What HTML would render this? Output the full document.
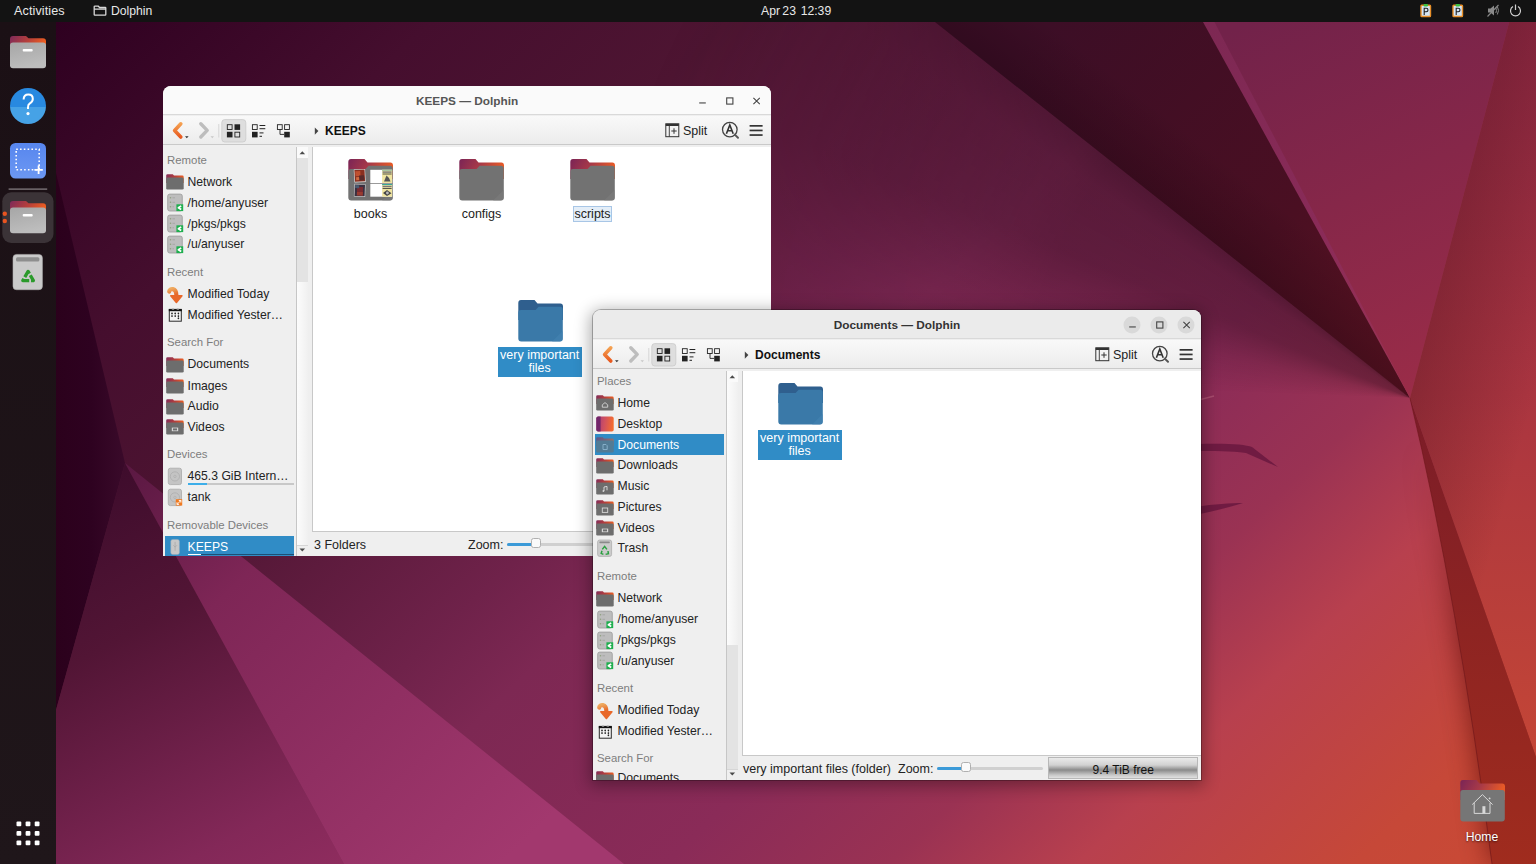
<!DOCTYPE html>
<html><head><meta charset="utf-8">
<style>
*{box-sizing:border-box}
html,body{margin:0;padding:0;width:1536px;height:864px;overflow:hidden;font-family:"Liberation Sans",sans-serif;background:#300020}
.abs{position:absolute}
#wall{position:absolute;left:0;top:0}
#topbar{position:absolute;left:0;top:0;width:1536px;height:22px;background:#131313;color:#e8e8e8;font-size:12.6px}
#dock{position:absolute;left:0;top:22px;width:56px;height:842px;background:linear-gradient(180deg,#1b1015,#1f161a)}
.win{position:absolute;width:608px;height:470px;overflow:hidden;border-radius:8px 8px 0 0;background:#efefef;color:#232323}
.win .tb{position:absolute;left:0;top:0;width:100%;height:29px;border-bottom:1px solid #d9d9d9}
.win .ttl{position:absolute;left:0;top:0;width:100%;text-align:center;font-weight:bold;font-size:11.8px;line-height:15px;padding-top:8px}
.win .tool{position:absolute;left:0;top:30px;width:100%;height:29px;background:linear-gradient(180deg,#f9f9f9,#ececec);border-bottom:1px solid #c9c9c9}
.win .side{position:absolute;left:0;top:59px;width:133px;height:411px;overflow:hidden;background:#efefef;font-size:12.5px}
.win .sitem{position:absolute;left:0;width:133px;height:21.5px;white-space:nowrap}
.win .sitem span{position:absolute;left:24.5px;line-height:15px}
.win .sitem svg{position:absolute;left:3px;top:3.5px}
.win .shdr{position:absolute;left:4px;color:#7d7d7d;white-space:nowrap;line-height:15px;font-size:12.3px}
.win .sel{color:#fff}
.win .sel::before{content:'';position:absolute;left:1.7px;top:0;width:129.4px;height:21.5px;background:#308cc6}
.win .sb{position:absolute;left:133px;top:61px;width:11.5px;height:409px;border-left:1px solid #c6c6c6;background:#efefef}
.win .content{position:absolute;left:149px;top:61px;width:459px;height:385px;background:#fff;border-left:1px solid #c8c8c8;border-bottom:1px solid #c8c8c8;overflow:hidden}
.win .status{position:absolute;left:149px;top:446px;width:459px;height:24px;font-size:12.5px;white-space:nowrap}
.lbl{position:absolute;text-align:center;font-size:12.5px;line-height:13.6px;white-space:nowrap}
</style></head><body>
<svg width="0" height="0" style="position:absolute"><defs>
<linearGradient id="sfBack" x1="0" y1="0" x2="1" y2="0.3"><stop offset="0" stop-color="#7e2a5a"/><stop offset="0.55" stop-color="#b8403a"/><stop offset="1" stop-color="#ee5e20"/></linearGradient>
<linearGradient id="bfBack" x1="0" y1="0" x2="1" y2="0.25"><stop offset="0" stop-color="#7a2456"/><stop offset="0.5" stop-color="#a83a48"/><stop offset="1" stop-color="#e85a26"/></linearGradient>
</defs></svg>
<!-- WALLPAPER -->
<svg id="wall" width="1536" height="864" viewBox="0 0 1536 864">
<defs>
<linearGradient id="gMain" gradientUnits="userSpaceOnUse" x1="0" y1="0" x2="1171" y2="1232">
<stop offset="0.032" stop-color="#2e0020"/>
<stop offset="0.184" stop-color="#450e2e"/>
<stop offset="0.305" stop-color="#4e1532"/>
<stop offset="0.448" stop-color="#6f224a"/>
<stop offset="0.501" stop-color="#7d2853"/>
<stop offset="0.638" stop-color="#8a2b58"/>
<stop offset="0.729" stop-color="#9a3253"/>
<stop offset="0.805" stop-color="#b8404e"/>
<stop offset="0.917" stop-color="#c64838"/>
<stop offset="1" stop-color="#ca4a34"/>
</linearGradient>
<linearGradient id="gShadow" gradientUnits="userSpaceOnUse" x1="1100" y1="151" x2="988" y2="292">
<stop offset="0" stop-color="#100008" stop-opacity="0.33"/>
<stop offset="0.42" stop-color="#100008" stop-opacity="0.28"/>
<stop offset="0.62" stop-color="#100008" stop-opacity="0.18"/>
<stop offset="0.93" stop-color="#100008" stop-opacity="0"/>
</linearGradient>
<linearGradient id="gFacetA" gradientUnits="userSpaceOnUse" x1="125" y1="463" x2="340" y2="864">
<stop offset="0" stop-color="#3e0c2c"/><stop offset="0.336" stop-color="#521535"/><stop offset="0.835" stop-color="#832858"/><stop offset="1" stop-color="#8e2c5e"/>
</linearGradient>
<linearGradient id="gLeft" gradientUnits="userSpaceOnUse" x1="40" y1="0" x2="125" y2="0">
<stop offset="0" stop-color="#2a001a"/><stop offset="0.6" stop-color="#2e0220"/><stop offset="1" stop-color="#3a0a2a"/>
</linearGradient>
<linearGradient id="gPink" gradientUnits="userSpaceOnUse" x1="125" y1="463" x2="500" y2="864">
<stop offset="0" stop-color="#5a1842"/><stop offset="0.3" stop-color="#7e2656"/><stop offset="1" stop-color="#a2386e"/>
</linearGradient>
<linearGradient id="gDark" gradientUnits="userSpaceOnUse" x1="1050" y1="22" x2="1400" y2="390">
<stop offset="0" stop-color="#3c0e26"/><stop offset="0.6" stop-color="#4a0f22"/><stop offset="1" stop-color="#5c1322"/>
</linearGradient>
<linearGradient id="gDarkEdge" gradientUnits="userSpaceOnUse" x1="1100" y1="152.6" x2="1143" y2="98">
<stop offset="0" stop-color="#100008" stop-opacity="0.25"/><stop offset="1" stop-color="#100008" stop-opacity="0"/>
</linearGradient>
<linearGradient id="gLight" gradientUnits="userSpaceOnUse" x1="1250" y1="22" x2="1420" y2="390">
<stop offset="0" stop-color="#72224a"/><stop offset="1" stop-color="#9a2c48"/>
</linearGradient>
<linearGradient id="gRight" gradientUnits="userSpaceOnUse" x1="0" y1="22" x2="0" y2="765">
<stop offset="0" stop-color="#962b46"/><stop offset="0.5" stop-color="#aa3540"/><stop offset="1" stop-color="#c44636"/>
</linearGradient>
<linearGradient id="gRightSh" gradientUnits="userSpaceOnUse" x1="1462" y1="210" x2="1578" y2="242">
<stop offset="0" stop-color="#3a0a18" stop-opacity="0.3"/><stop offset="1" stop-color="#3a0a18" stop-opacity="0"/>
</linearGradient>
<linearGradient id="gCrease" gradientUnits="userSpaceOnUse" x1="1490" y1="630" x2="1440" y2="647">
<stop offset="0" stop-color="#6a1020" stop-opacity="0.55"/><stop offset="1" stop-color="#6a1020" stop-opacity="0"/>
</linearGradient>
<linearGradient id="gCrease2" gradientUnits="userSpaceOnUse" x1="1536" y1="765" x2="1520" y2="864">
<stop offset="0" stop-color="#8a2020"/><stop offset="1" stop-color="#9a2a20"/>
</linearGradient>
<linearGradient id="gShMask" gradientUnits="userSpaceOnUse" x1="935" y1="22" x2="1410" y2="398">
<stop offset="0" stop-color="#fff" stop-opacity="0.45"/><stop offset="1" stop-color="#fff" stop-opacity="1"/>
</linearGradient>
<mask id="shMask" maskUnits="userSpaceOnUse" x="0" y="0" width="1536" height="864"><rect x="0" y="0" width="1536" height="864" fill="url(#gShMask)"/></mask>
<linearGradient id="gBand" gradientUnits="userSpaceOnUse" x1="0" y1="398" x2="0" y2="864">
<stop offset="0" stop-color="#7a1c28"/><stop offset="0.5" stop-color="#8e2422"/><stop offset="1" stop-color="#a02c1e"/>
</linearGradient>
<filter id="blur14" x="-100%" y="-20%" width="300%" height="140%"><feGaussianBlur stdDeviation="14"/></filter>
<linearGradient id="gBandMask" gradientUnits="userSpaceOnUse" x1="0" y1="430" x2="0" y2="640">
<stop offset="0" stop-color="#fff" stop-opacity="0"/><stop offset="1" stop-color="#fff" stop-opacity="1"/>
</linearGradient>
<mask id="bandMask" maskUnits="userSpaceOnUse" x="0" y="0" width="1536" height="864"><rect x="0" y="0" width="1536" height="864" fill="url(#gBandMask)"/></mask>
<filter id="blur40" x="-50%" y="-50%" width="200%" height="200%"><feGaussianBlur stdDeviation="40"/></filter>
<filter id="blur3" x="-20%" y="-20%" width="140%" height="140%"><feGaussianBlur stdDeviation="3"/></filter>
</defs>
<rect x="0" y="0" width="1536" height="864" fill="url(#gMain)"/>
<polygon points="0,0 15,0 125,463 13,864 0,864" fill="url(#gLeft)"/>
<polygon points="125,463 13,864 344,864" fill="url(#gFacetA)"/>
<polygon points="125,463 344,864 624,864" fill="url(#gPink)"/>
<path d="M1410,398 Q1458,600 1492,864 L1536,864 L1536,757 Z" fill="#4a0810" opacity="0.6" filter="url(#blur14)" mask="url(#bandMask)"/>
</svg>
<div class="abs" style="left:0;top:0;width:1536px;height:864px;background:conic-gradient(from 0deg at 1410px 398px, rgba(16,0,8,0) 0deg, rgba(16,0,8,0) 272deg, rgba(16,0,8,0.12) 283deg, rgba(16,0,8,0.30) 293deg, rgba(16,0,8,0.34) 304deg, rgba(16,0,8,0.42) 308deg, rgba(16,0,8,0.42) 310deg, rgba(16,0,8,0) 310.5deg);-webkit-mask-image:radial-gradient(circle at 1410px 398px, #000 0px, #000 380px, rgba(0,0,0,0.6) 600px, rgba(0,0,0,0) 820px)"></div>
<svg class="abs" style="left:0;top:0" width="1536" height="864" viewBox="0 0 1536 864">
<polygon points="935,22 1203,22 1410,398" fill="url(#gDark)"/>
<polygon points="935,22 1203,22 1410,398" fill="url(#gDarkEdge)"/>
<polygon points="1203,0 1515,0 1410,398" fill="url(#gLight)"/>
<polygon points="1515,0 1536,0 1536,757 1410,398" fill="url(#gRight)"/>
<polygon points="1515,0 1536,0 1536,757 1410,398" fill="url(#gRightSh)"/>
<path d="M1410,398 Q1458,600 1492,864 L1536,864 L1536,757 Z" fill="url(#gBand)"/>
<path d="M1410,398 Q1458,600 1492,864" fill="none" stroke="#6a1418" stroke-width="1" opacity="0.6"/>
<path d="M1195,444 C1225,443 1245,444 1252,447 L1278,467 L1246,453 C1230,451 1215,451 1195,451 Z" fill="#6c1a40" opacity="0.9"/>
<path d="M1195,401 L1214,396" stroke="#b45a78" stroke-width="1.3" opacity="0.7"/>
<path d="M1195,507 C1215,504 1230,503 1243,503 C1230,507 1215,511 1195,515 Z" fill="#6c1a40" opacity="0.9"/>
</svg>



<div class="abs" style="left:1458px;top:780px;width:48px;height:66px">
<svg class="abs" style="left:2px;top:0" width="46" height="42" viewBox="0 0 46 42">
<path d="M3,0 H16.5 L19.5,3.5 H42.3 Q45,3.5 45,6.5 V20 H0.3 V3 Q0.3,0 3,0 Z" fill="url(#bfBack)"/>
<path d="M3,9.9 H42 Q44.8,9.9 44.8,12.9 V38.6 Q44.8,41.6 41.8,41.6 H3.3 Q0.3,41.6 0.3,38.6 V12.9 Q0.3,9.9 3,9.9 Z" fill="#767676"/>
<path d="M12.2,24.6 L22.4,14.6 L32.6,24.6 M14.2,22.8 V33.4 H30 V22.8" fill="none" stroke="#d8d8d8" stroke-width="1"/>
<rect x="22.4" y="26.2" width="3" height="7.2" fill="#d8d8d8"/><circle cx="29.6" cy="18.4" r="0.9" fill="#d8d8d8"/>
</svg>
<div class="abs" style="left:-10px;top:49.5px;width:68px;text-align:center;color:#fff;font-size:12.2px;line-height:14px;text-shadow:0 1px 2px rgba(0,0,0,0.6)">Home</div>
</div>
<div class="win" style="left:163px;top:86px;">
<div class="tb" style="background:#fafafa"><div class="ttl" style="color:#555">KEEPS — Dolphin</div><svg class="abs" style="left:0;top:0" width="608" height="29" viewBox="0 0 608 29">
<rect x="536.2" y="16.4" width="6.6" height="1.1" fill="#444"/>
<rect x="563.7" y="11.9" width="6.2" height="6.2" fill="none" stroke="#444" stroke-width="1.1"/>
<path d="M590.4,11.8 L596.8,18.2 M596.8,11.8 L590.4,18.2" stroke="#444" stroke-width="1.1"/>
</svg></div>
<div class="tool">
<svg class="abs" style="left:0;top:0" width="608" height="29" viewBox="0 30 608 29">
<defs><linearGradient id="bkGKEEPS" x1="0" y1="0" x2="0" y2="1"><stop offset="0" stop-color="#f4a050"/><stop offset="1" stop-color="#e85a20"/></linearGradient></defs>
<path d="M17.8,37.8 L11.6,44.4 L17.8,51" fill="none" stroke="url(#bkGKEEPS)" stroke-width="3.6" stroke-linejoin="round" stroke-linecap="round"/>
<path d="M22,50.2 L25.6,50.2 L23.8,52.3 Z" fill="#333"/>
<path d="M37.8,37.8 L44.2,44.4 L37.8,51" fill="none" stroke="#bdbdbd" stroke-width="3.4" stroke-linejoin="round" stroke-linecap="round"/>
<path d="M47.5,50.2 L51,50.2 L49.3,52.3 Z" fill="#c8c8c8"/>
<rect x="55.3" y="38" width="1" height="13.5" fill="#d6d6d6"/>
<rect x="58.8" y="33.6" width="24" height="22.4" rx="3" fill="#dedede" stroke="#cacaca" stroke-width="0.8"/>
<g fill="#222"><rect x="71.5" y="38.3" width="5.6" height="5.6"/><rect x="63.9" y="45.8" width="5.6" height="5.6"/></g>
<g fill="none" stroke="#222" stroke-width="0.9"><rect x="64.3" y="38.7" width="4.8" height="4.8"/><rect x="71.9" y="46.2" width="4.8" height="4.8"/></g>
<rect x="89.4" y="38.7" width="4.8" height="4.8" fill="none" stroke="#222" stroke-width="0.9"/>
<rect x="89" y="45.8" width="5.6" height="5.6" fill="#222"/>
<g fill="#222"><rect x="96.5" y="39" width="5.8" height="1"/><rect x="96.5" y="42.2" width="5.8" height="1"/><rect x="96.5" y="46.4" width="4" height="1"/><rect x="96.5" y="49.8" width="2.5" height="1"/></g>
<g fill="none" stroke="#222" stroke-width="0.9"><rect x="114.4" y="38.7" width="4.8" height="4.8"/><rect x="121.6" y="38.7" width="4.8" height="4.8"/><path d="M117,43.5 V48.4 H121"/></g>
<rect x="121.2" y="45.8" width="5.6" height="5.6" fill="#222"/>
<path d="M151.8,41.6 L155.4,45.1 L151.8,48.7 Z" fill="#444"/>
<rect x="502.8" y="37.8" width="13" height="12.9" fill="none" stroke="#333" stroke-width="1"/>
<rect x="502.8" y="37.8" width="13" height="2.2" fill="#333"/>
<path d="M506.3,40 V50.7" stroke="#333" stroke-width="0.9"/>
<path d="M511,42.3 V47.8 M508.3,45 H513.7" stroke="#333" stroke-width="1"/>
<circle cx="566.8" cy="43.6" r="7.3" fill="none" stroke="#444" stroke-width="1.3"/>
<path d="M571.8,48.6 L575,51.8" stroke="#555" stroke-width="2" stroke-linecap="round"/>
<path d="M563.4,47.8 L566.8,39 L570.2,47.8 M564.6,44.8 H569" fill="none" stroke="#333" stroke-width="1.6"/>
<g fill="#333"><rect x="586.6" y="39" width="13" height="1.7"/><rect x="586.6" y="43.6" width="13" height="1.7"/><rect x="586.6" y="48.2" width="13" height="1.7"/></g>
</svg>
<span class="abs" style="left:162px;top:8px;font-weight:bold;font-size:12px;line-height:15px;color:#111">KEEPS</span>
<span class="abs" style="left:520px;top:8px;font-size:12.5px;line-height:15px;color:#222">Split</span>
</div>
<div class="side"><div class="shdr" style="top:8.23px;font-size:11.4px">Remote</div>
<div class="sitem" style="top:25.90px"><svg width="18" height="16" viewBox="0 0 18 16"><path d="M1.5,0.3 H6.8 L8,1.6 H16.3 Q17.7,1.6 17.7,3 V9 H0.2 V1.6 Q0.2,0.3 1.5,0.3 Z" fill="url(#sfBack)"/><path d="M1.5,3.6 H16.3 Q17.7,3.6 17.7,5 V14.2 Q17.7,15.6 16.3,15.6 H1.5 Q0.2,15.6 0.2,14.2 V5 Q0.2,3.6 1.5,3.6 Z" fill="#6d6d6d"/></svg><span style="top:3.97px;font-size:12.2px">Network</span></div>
<div class="sitem" style="top:46.70px"><svg width="18" height="18" viewBox="0 0 18 18" style="overflow:visible"><rect x="1.7" y="-0.9" width="14.6" height="16.9" rx="2" fill="#bdbdbd" stroke="#9a9a9a" stroke-width="0.8"/><g fill="#8fa07f"><circle cx="4.5" cy="2.8" r="0.8"/><circle cx="4.5" cy="7.3" r="0.8"/><circle cx="4.5" cy="11.8" r="0.8"/></g><g stroke="#999" stroke-width="0.6"><path d="M6.5,2.8 H9"/><path d="M6.5,7.3 H9"/><path d="M6.5,11.8 H8"/></g><rect x="10.4" y="9.3" width="6.8" height="6.8" fill="#1eae4e"/><path d="M15.2,10.9 L12.4,12.7 L15.2,14.5" fill="none" stroke="#fff" stroke-width="1.7" stroke-linejoin="round"/></svg><span style="top:3.97px;font-size:12.2px">/home/anyuser</span></div>
<div class="sitem" style="top:67.60px"><svg width="18" height="18" viewBox="0 0 18 18" style="overflow:visible"><rect x="1.7" y="-0.9" width="14.6" height="16.9" rx="2" fill="#bdbdbd" stroke="#9a9a9a" stroke-width="0.8"/><g fill="#8fa07f"><circle cx="4.5" cy="2.8" r="0.8"/><circle cx="4.5" cy="7.3" r="0.8"/><circle cx="4.5" cy="11.8" r="0.8"/></g><g stroke="#999" stroke-width="0.6"><path d="M6.5,2.8 H9"/><path d="M6.5,7.3 H9"/><path d="M6.5,11.8 H8"/></g><rect x="10.4" y="9.3" width="6.8" height="6.8" fill="#1eae4e"/><path d="M15.2,10.9 L12.4,12.7 L15.2,14.5" fill="none" stroke="#fff" stroke-width="1.7" stroke-linejoin="round"/></svg><span style="top:3.97px;font-size:12.2px">/pkgs/pkgs</span></div>
<div class="sitem" style="top:88.40px"><svg width="18" height="18" viewBox="0 0 18 18" style="overflow:visible"><rect x="1.7" y="-0.9" width="14.6" height="16.9" rx="2" fill="#bdbdbd" stroke="#9a9a9a" stroke-width="0.8"/><g fill="#8fa07f"><circle cx="4.5" cy="2.8" r="0.8"/><circle cx="4.5" cy="7.3" r="0.8"/><circle cx="4.5" cy="11.8" r="0.8"/></g><g stroke="#999" stroke-width="0.6"><path d="M6.5,2.8 H9"/><path d="M6.5,7.3 H9"/><path d="M6.5,11.8 H8"/></g><rect x="10.4" y="9.3" width="6.8" height="6.8" fill="#1eae4e"/><path d="M15.2,10.9 L12.4,12.7 L15.2,14.5" fill="none" stroke="#fff" stroke-width="1.7" stroke-linejoin="round"/></svg><span style="top:3.97px;font-size:12.2px">/u/anyuser</span></div>
<div class="shdr" style="top:119.53px;font-size:11.4px">Recent</div>
<div class="sitem" style="top:138.20px"><svg width="18" height="18" viewBox="0 0 18 18" style="overflow:visible"><defs><linearGradient id="arG" x1="0" y1="0" x2="0.3" y2="1"><stop offset="0" stop-color="#eeaa60"/><stop offset="1" stop-color="#e66a2a"/></linearGradient></defs><path d="M3.2,4.6 C3.6,0.9 10.4,0.4 10.4,8.6" fill="none" stroke="url(#arG)" stroke-width="4.2" stroke-linecap="round"/><path d="M4.8,8.8 L15.9,8.8 L10.4,15.4 Z" fill="#e8682a" stroke="#e8682a" stroke-width="1.6" stroke-linejoin="round"/></svg><span style="top:3.97px;font-size:12.2px">Modified Today</span></div>
<div class="sitem" style="top:158.90px"><svg width="18" height="18" viewBox="0 0 18 18"><rect x="3.3" y="2.7" width="12" height="11.5" fill="#f4f4f4" stroke="#2a2a2a" stroke-width="1"/><rect x="2.8" y="1.9" width="13" height="2.3" fill="#111"/><ellipse cx="7" cy="2.2" rx="1.3" ry="0.6" fill="#999"/><ellipse cx="11.8" cy="2.2" rx="1.3" ry="0.6" fill="#999"/><g fill="#aaa"><rect x="5.6" y="6.3" width="0.8" height="2.8"/><rect x="8.8" y="6.3" width="0.8" height="2.8"/><rect x="12" y="6.3" width="0.8" height="5"/></g><g fill="#222"><circle cx="6" cy="6.3" r="0.85"/><circle cx="9.2" cy="6.3" r="0.85"/><circle cx="12.4" cy="6.3" r="0.85"/><circle cx="6" cy="9.1" r="0.85"/><circle cx="9.2" cy="9.1" r="0.85"/><circle cx="12.4" cy="9.1" r="0.85"/><circle cx="12.4" cy="11.3" r="0.85"/></g></svg><span style="top:3.97px;font-size:12.2px">Modified Yester…</span></div>
<div class="shdr" style="top:190.33px;font-size:11.4px">Search For</div>
<div class="sitem" style="top:208.50px"><svg width="18" height="16" viewBox="0 0 18 16"><path d="M1.5,0.3 H6.8 L8,1.6 H16.3 Q17.7,1.6 17.7,3 V9 H0.2 V1.6 Q0.2,0.3 1.5,0.3 Z" fill="url(#sfBack)"/><path d="M1.5,3.6 H16.3 Q17.7,3.6 17.7,5 V14.2 Q17.7,15.6 16.3,15.6 H1.5 Q0.2,15.6 0.2,14.2 V5 Q0.2,3.6 1.5,3.6 Z" fill="#6d6d6d"/></svg><span style="top:3.97px;font-size:12.2px">Documents</span></div>
<div class="sitem" style="top:229.60px"><svg width="18" height="16" viewBox="0 0 18 16"><path d="M1.5,0.3 H6.8 L8,1.6 H16.3 Q17.7,1.6 17.7,3 V9 H0.2 V1.6 Q0.2,0.3 1.5,0.3 Z" fill="url(#sfBack)"/><path d="M1.5,3.6 H16.3 Q17.7,3.6 17.7,5 V14.2 Q17.7,15.6 16.3,15.6 H1.5 Q0.2,15.6 0.2,14.2 V5 Q0.2,3.6 1.5,3.6 Z" fill="#6d6d6d"/></svg><span style="top:3.97px;font-size:12.2px">Images</span></div>
<div class="sitem" style="top:250.10px"><svg width="18" height="16" viewBox="0 0 18 16"><path d="M1.5,0.3 H6.8 L8,1.6 H16.3 Q17.7,1.6 17.7,3 V9 H0.2 V1.6 Q0.2,0.3 1.5,0.3 Z" fill="url(#sfBack)"/><path d="M1.5,3.6 H16.3 Q17.7,3.6 17.7,5 V14.2 Q17.7,15.6 16.3,15.6 H1.5 Q0.2,15.6 0.2,14.2 V5 Q0.2,3.6 1.5,3.6 Z" fill="#6d6d6d"/></svg><span style="top:3.97px;font-size:12.2px">Audio</span></div>
<div class="sitem" style="top:270.80px"><svg width="18" height="16" viewBox="0 0 18 16"><path d="M1.5,0.3 H6.8 L8,1.6 H16.3 Q17.7,1.6 17.7,3 V9 H0.2 V1.6 Q0.2,0.3 1.5,0.3 Z" fill="url(#sfBack)"/><path d="M1.5,3.6 H16.3 Q17.7,3.6 17.7,5 V14.2 Q17.7,15.6 16.3,15.6 H1.5 Q0.2,15.6 0.2,14.2 V5 Q0.2,3.6 1.5,3.6 Z" fill="#6d6d6d"/><rect x="5.8" y="8.6" width="6.4" height="3.6" fill="#d6d6d6"/><rect x="7" y="9.4" width="4" height="2" fill="#6d6d6d"/></svg><span style="top:3.97px;font-size:12.2px">Videos</span></div>
<div class="shdr" style="top:302.43px;font-size:11.4px">Devices</div>
<div class="sitem" style="top:320.40px"><svg width="18" height="18" viewBox="0 0 18 18" style="overflow:visible"><rect x="2.3" y="-0.8" width="13.2" height="16.4" rx="2" fill="#c4c4c4" stroke="#a9a9a9" stroke-width="0.8"/><circle cx="8.9" cy="7.4" r="4.6" fill="none" stroke="#b0b0b0" stroke-width="0.9"/><circle cx="8.9" cy="7.4" r="1.2" fill="none" stroke="#b0b0b0" stroke-width="0.8"/></svg><span style="top:3.97px;font-size:12.2px">465.3 GiB Intern…</span><div class="abs" style="left:24.5px;top:18px;width:106px;height:1.8px;background:#c8c8c8"></div><div class="abs" style="left:24.5px;top:18px;width:19px;height:1.8px;background:#3daee9"></div></div>
<div class="sitem" style="top:341.10px"><svg width="18" height="18" viewBox="0 0 18 18" style="overflow:visible"><rect x="2.3" y="-0.8" width="13.2" height="16.4" rx="2" fill="#c4c4c4" stroke="#a9a9a9" stroke-width="0.8"/><circle cx="8.9" cy="7.4" r="4.6" fill="none" stroke="#b0b0b0" stroke-width="0.9"/><circle cx="8.9" cy="7.4" r="1.2" fill="none" stroke="#b0b0b0" stroke-width="0.8"/><rect x="9.8" y="9.2" width="6.4" height="6.4" fill="#f07a20"/><path d="M11,14.4 L14.9,10.5 M12.8,10.5 H14.9 V12.6 M11,12.3 V14.4 H13.1" fill="none" stroke="#fff" stroke-width="0.9"/></svg><span style="top:3.97px;font-size:12.2px">tank</span></div>
<div class="shdr" style="top:372.73px;font-size:11.4px">Removable Devices</div>
<div class="sitem sel" style="top:390.70px"><svg width="18" height="18" viewBox="0 0 18 18" style="overflow:visible"><rect x="4.8" y="0.4" width="8.6" height="15.2" rx="2" fill="#c8c8c8" stroke="#9ab" stroke-width="0.5"/><path d="M9.1,2.8 V11.8 M7.3,6.3 L9.1,8.1 L10.9,6.3" fill="none" stroke="#aaa" stroke-width="0.8"/></svg><span style="top:3.97px;font-size:12.2px">KEEPS</span><div class="abs" style="left:24.5px;top:18px;width:106px;height:1.8px;background:#1d4f74"></div><div class="abs" style="left:24.5px;top:18px;width:13px;height:1.8px;background:#fff"></div></div></div>
<div class="sb">
<div class="abs" style="left:0;top:0;width:10.5px;height:11px;background:#fafafa"></div>
<div class="abs" style="left:0;top:11px;width:10.5px;height:124px;background:#e3e3e3"></div>
<div class="abs" style="left:0;top:135px;width:10.5px;height:262.5px;background:linear-gradient(90deg,#fcfcfc,#f0f0f0)"></div>
<div class="abs" style="left:0;top:397.5px;width:10.5px;height:1px;background:#d6d6d6"></div>
<svg class="abs" style="left:0;top:0" width="11" height="409" viewBox="0 0 11 409"><path d="M2.5,7.3 L5.3,4.2 L8.1,7.3 Z" fill="#4a4a4a"/><path d="M2.5,401.5 L5.3,404.6 L8.1,401.5 Z" fill="#4a4a4a"/></svg>
</div>
<div class="content">
<div class="abs" style="left:34.6px;top:12px"><div class="abs" style="left:0;top:0;width:46px;height:42px"><svg width="46" height="42" viewBox="0 0 46 42"><path d="M3,0 H16.5 L19.5,3.5 H42.3 Q45,3.5 45,6.5 V20 H0.3 V3 Q0.3,0 3,0 Z" fill="url(#bfBack)"/><path d="M3,9.9 H17.6 L20.6,6.7 H42 Q44.8,6.7 44.8,9.7 V38.6 Q44.8,41.6 41.8,41.6 H3.3 Q0.3,41.6 0.3,38.6 V12.9 Q0.3,9.9 3,9.9 Z" fill="#727272"/><path d="M44.8,31 V38.6 Q44.8,41.6 41.8,41.6 H34 Z" fill="#7d7d7d" opacity="0.6"/></svg><svg class="abs" style="left:0;top:0" width="46" height="42" viewBox="0 0 46 42"><g transform="rotate(-3 11.7 16.7)"><rect x="6.1" y="10.2" width="11.3" height="13" fill="#dddddd"/><rect x="6.7" y="10.8" width="10.1" height="11.8" fill="#8a3020"/><rect x="7.5" y="12" width="5" height="5" fill="#c05030"/><rect x="11" y="16.5" width="5" height="5" fill="#5a2a2a"/><rect x="8" y="18" width="3" height="3" fill="#d06a40"/></g><g transform="rotate(2 11.7 31.3)"><rect x="6.1" y="25" width="11.3" height="12.7" fill="#cfcfcf"/><rect x="6.7" y="25.6" width="10.1" height="11.5" fill="#3a3040"/><rect x="9" y="28" width="6" height="5" fill="#7a2a30"/><rect x="7" y="26.2" width="4" height="3" fill="#4a5a70"/><rect x="9" y="33" width="6" height="3.6" fill="#9a3a30"/></g><rect x="22.3" y="10.8" width="21.8" height="13.2" fill="#fff"/><rect x="22.3" y="25" width="21.8" height="12.7" fill="#fff"/><rect x="22.3" y="24" width="21.8" height="1" fill="#9a9a9a"/><rect x="34.1" y="10.8" width="10" height="13.2" fill="#efe4a0"/><rect x="34.1" y="25" width="10" height="12.7" fill="#efe4a0"/><rect x="34.1" y="10.8" width="10" height="1" fill="#9ac0a0"/><rect x="34.6" y="12.4" width="9" height="1.4" fill="#777"/><rect x="34.6" y="14.6" width="9" height="0.8" fill="#333"/><path d="M36,22.5 L38.5,16.5 L41,19 L42.5,22.5 Z" fill="#555"/><rect x="34.1" y="25" width="10" height="1.1" fill="#3aa898"/><rect x="34.6" y="26.8" width="9" height="1.4" fill="#777"/><rect x="34.6" y="29" width="9" height="0.8" fill="#333"/><path d="M35,34 L39,31 L43.5,34.2 L39,37 Z" fill="#444"/><circle cx="39.4" cy="34" r="1.4" fill="#bbb"/></svg></div></div>
<div class="abs" style="left:146.2px;top:12px"><svg width="46" height="42" viewBox="0 0 46 42"><path d="M3,0 H16.5 L19.5,3.5 H42.3 Q45,3.5 45,6.5 V20 H0.3 V3 Q0.3,0 3,0 Z" fill="url(#bfBack)"/><path d="M3,9.9 H17.6 L20.6,6.7 H42 Q44.8,6.7 44.8,9.7 V38.6 Q44.8,41.6 41.8,41.6 H3.3 Q0.3,41.6 0.3,38.6 V12.9 Q0.3,9.9 3,9.9 Z" fill="#727272"/><path d="M44.8,31 V38.6 Q44.8,41.6 41.8,41.6 H34 Z" fill="#7d7d7d" opacity="0.6"/></svg></div>
<div class="abs" style="left:257.2px;top:12px"><svg width="46" height="42" viewBox="0 0 46 42"><path d="M3,0 H16.5 L19.5,3.5 H42.3 Q45,3.5 45,6.5 V20 H0.3 V3 Q0.3,0 3,0 Z" fill="url(#bfBack)"/><path d="M3,9.9 H17.6 L20.6,6.7 H42 Q44.8,6.7 44.8,9.7 V38.6 Q44.8,41.6 41.8,41.6 H3.3 Q0.3,41.6 0.3,38.6 V12.9 Q0.3,9.9 3,9.9 Z" fill="#727272"/><path d="M44.8,31 V38.6 Q44.8,41.6 41.8,41.6 H34 Z" fill="#7d7d7d" opacity="0.6"/></svg></div>
<div class="lbl" style="left:9.5px;top:61.3px;width:96px;color:#222">books</div>
<div class="lbl" style="left:120.5px;top:61.3px;width:96px;color:#222">configs</div>
<div class="abs" style="left:260px;top:59px;width:38.6px;height:16px;background:#e4eef8;border:1px solid #a8c6e6"></div>
<div class="lbl" style="left:231.5px;top:60.8px;width:96px;color:#222">scripts</div>
<div class="abs" style="left:205px;top:153.4px"><svg width="46" height="42" viewBox="0 0 46 42"><path d="M3,0 H16.5 L19.5,3.5 H42.3 Q45,3.5 45,6.5 V20 H0.3 V3 Q0.3,0 3,0 Z" fill="#2f5f8e"/><path d="M3,9.9 H17.6 L20.6,6.7 H42 Q44.8,6.7 44.8,9.7 V38.6 Q44.8,41.6 41.8,41.6 H3.3 Q0.3,41.6 0.3,38.6 V12.9 Q0.3,9.9 3,9.9 Z" fill="#3a79a8"/><path d="M44.8,31 V38.6 Q44.8,41.6 41.8,41.6 H34 Z" fill="#4584b2" opacity="0.6"/></svg></div>
<div class="abs" style="left:184.6px;top:199.5px;width:84.2px;height:30px;background:#308cc6"></div>
<div class="lbl" style="left:176.7px;top:201.5px;width:100px;color:#fff">very important<br>files</div>
</div>
<div class="status"><span class="abs" style="left:2px;top:5.5px;line-height:15px">3 Folders</span>
<span class="abs" style="left:156px;top:5.5px;line-height:15px">Zoom:</span>
<div class="abs" style="left:195px;top:10.5px;width:106px;height:3.5px;border-radius:2px;background:#d0d0d0"></div>
<div class="abs" style="left:195px;top:10.5px;width:28px;height:3.5px;border-radius:2px;background:#3b9ad8"></div>
<div class="abs" style="left:219px;top:5.5px;width:9.6px;height:10px;border-radius:2.5px;background:#fafafa;border:1px solid #b0b0b0"></div></div>
</div>
<div class="win" style="left:593px;top:310px;box-shadow:0 0 0 1px rgba(0,0,0,0.26),0 3px 16px 3px rgba(0,0,0,0.32);">
<div class="tb" style="background:#ebebeb"><div class="ttl" style="color:#333">Documents — Dolphin</div><svg class="abs" style="left:0;top:0" width="608" height="29" viewBox="0 0 608 29"><circle cx="539" cy="15" r="8.5" fill="#d9d9d9"/><circle cx="566" cy="15" r="8.5" fill="#d9d9d9"/><circle cx="593" cy="15" r="8.5" fill="#d9d9d9"/>
<rect x="536.2" y="16.4" width="6.6" height="1.1" fill="#444"/>
<rect x="563.7" y="11.9" width="6.2" height="6.2" fill="none" stroke="#444" stroke-width="1.1"/>
<path d="M590.4,11.8 L596.8,18.2 M596.8,11.8 L590.4,18.2" stroke="#444" stroke-width="1.1"/>
</svg></div>
<div class="tool">
<svg class="abs" style="left:0;top:0" width="608" height="29" viewBox="0 30 608 29">
<defs><linearGradient id="bkGDocuments" x1="0" y1="0" x2="0" y2="1"><stop offset="0" stop-color="#f4a050"/><stop offset="1" stop-color="#e85a20"/></linearGradient></defs>
<path d="M17.8,37.8 L11.6,44.4 L17.8,51" fill="none" stroke="url(#bkGDocuments)" stroke-width="3.6" stroke-linejoin="round" stroke-linecap="round"/>
<path d="M22,50.2 L25.6,50.2 L23.8,52.3 Z" fill="#333"/>
<path d="M37.8,37.8 L44.2,44.4 L37.8,51" fill="none" stroke="#bdbdbd" stroke-width="3.4" stroke-linejoin="round" stroke-linecap="round"/>
<path d="M47.5,50.2 L51,50.2 L49.3,52.3 Z" fill="#c8c8c8"/>
<rect x="55.3" y="38" width="1" height="13.5" fill="#d6d6d6"/>
<rect x="58.8" y="33.6" width="24" height="22.4" rx="3" fill="#dedede" stroke="#cacaca" stroke-width="0.8"/>
<g fill="#222"><rect x="71.5" y="38.3" width="5.6" height="5.6"/><rect x="63.9" y="45.8" width="5.6" height="5.6"/></g>
<g fill="none" stroke="#222" stroke-width="0.9"><rect x="64.3" y="38.7" width="4.8" height="4.8"/><rect x="71.9" y="46.2" width="4.8" height="4.8"/></g>
<rect x="89.4" y="38.7" width="4.8" height="4.8" fill="none" stroke="#222" stroke-width="0.9"/>
<rect x="89" y="45.8" width="5.6" height="5.6" fill="#222"/>
<g fill="#222"><rect x="96.5" y="39" width="5.8" height="1"/><rect x="96.5" y="42.2" width="5.8" height="1"/><rect x="96.5" y="46.4" width="4" height="1"/><rect x="96.5" y="49.8" width="2.5" height="1"/></g>
<g fill="none" stroke="#222" stroke-width="0.9"><rect x="114.4" y="38.7" width="4.8" height="4.8"/><rect x="121.6" y="38.7" width="4.8" height="4.8"/><path d="M117,43.5 V48.4 H121"/></g>
<rect x="121.2" y="45.8" width="5.6" height="5.6" fill="#222"/>
<path d="M151.8,41.6 L155.4,45.1 L151.8,48.7 Z" fill="#444"/>
<rect x="502.8" y="37.8" width="13" height="12.9" fill="none" stroke="#333" stroke-width="1"/>
<rect x="502.8" y="37.8" width="13" height="2.2" fill="#333"/>
<path d="M506.3,40 V50.7" stroke="#333" stroke-width="0.9"/>
<path d="M511,42.3 V47.8 M508.3,45 H513.7" stroke="#333" stroke-width="1"/>
<circle cx="566.8" cy="43.6" r="7.3" fill="none" stroke="#444" stroke-width="1.3"/>
<path d="M571.8,48.6 L575,51.8" stroke="#555" stroke-width="2" stroke-linecap="round"/>
<path d="M563.4,47.8 L566.8,39 L570.2,47.8 M564.6,44.8 H569" fill="none" stroke="#333" stroke-width="1.6"/>
<g fill="#333"><rect x="586.6" y="39" width="13" height="1.7"/><rect x="586.6" y="43.6" width="13" height="1.7"/><rect x="586.6" y="48.2" width="13" height="1.7"/></g>
</svg>
<span class="abs" style="left:162px;top:8px;font-weight:bold;font-size:12px;line-height:15px;color:#111">Documents</span>
<span class="abs" style="left:520px;top:8px;font-size:12.5px;line-height:15px;color:#222">Split</span>
</div>
<div class="side"><div class="shdr" style="top:4.68px;font-size:11.4px">Places</div>
<div class="sitem" style="top:22.95px"><svg width="18" height="16" viewBox="0 0 18 16"><path d="M1.5,0.3 H6.8 L8,1.6 H16.3 Q17.7,1.6 17.7,3 V9 H0.2 V1.6 Q0.2,0.3 1.5,0.3 Z" fill="url(#sfBack)"/><path d="M1.5,3.6 H16.3 Q17.7,3.6 17.7,5 V14.2 Q17.7,15.6 16.3,15.6 H1.5 Q0.2,15.6 0.2,14.2 V5 Q0.2,3.6 1.5,3.6 Z" fill="#6d6d6d"/><path d="M6.3,12.2 V9.8 L9,7.6 L11.7,9.8 V12.2 Z" fill="none" stroke="#d6d6d6" stroke-width="0.9"/></svg><span style="top:3.97px;font-size:12.2px">Home</span></div>
<div class="sitem" style="top:43.70px"><svg width="18" height="16" viewBox="0 0 18 16"><defs><linearGradient id="dsG" x1="0" y1="0" x2="1" y2="0.1"><stop offset="0" stop-color="#a03a7a"/><stop offset="0.5" stop-color="#d05060"/><stop offset="1" stop-color="#f46c30"/></linearGradient></defs><rect x="0.3" y="0.6" width="17.4" height="15" rx="1.8" fill="url(#dsG)"/><path d="M2.1,0.6 H4.6 V15.6 H2.1 Q0.3,15.6 0.3,13.8 V2.4 Q0.3,0.6 2.1,0.6 Z" fill="#6a2268" opacity="0.9"/></svg><span style="top:3.97px;font-size:12.2px">Desktop</span></div>
<div class="sitem sel" style="top:64.70px"><svg width="18" height="16" viewBox="0 0 18 16"><path d="M1.5,0.3 H6.8 L8,1.6 H16.3 Q17.7,1.6 17.7,3 V9 H0.2 V1.6 Q0.2,0.3 1.5,0.3 Z" fill="url(#sfBack)"/><path d="M1.5,3.6 H16.3 Q17.7,3.6 17.7,5 V14.2 Q17.7,15.6 16.3,15.6 H1.5 Q0.2,15.6 0.2,14.2 V5 Q0.2,3.6 1.5,3.6 Z" fill="#6d6d6d"/><path d="M7,7.5 H10 L11.2,8.7 V12.5 H7 Z" fill="none" stroke="#d6d6d6" stroke-width="0.9"/></svg><div class="abs" style="left:3px;top:3.5px;width:18px;height:16px;background:rgba(48,140,198,0.45)"></div><span style="top:3.97px;font-size:12.2px">Documents</span></div>
<div class="sitem" style="top:85.45px"><svg width="18" height="16" viewBox="0 0 18 16"><path d="M1.5,0.3 H6.8 L8,1.6 H16.3 Q17.7,1.6 17.7,3 V9 H0.2 V1.6 Q0.2,0.3 1.5,0.3 Z" fill="url(#sfBack)"/><path d="M1.5,3.6 H16.3 Q17.7,3.6 17.7,5 V14.2 Q17.7,15.6 16.3,15.6 H1.5 Q0.2,15.6 0.2,14.2 V5 Q0.2,3.6 1.5,3.6 Z" fill="#6d6d6d"/></svg><span style="top:3.97px;font-size:12.2px">Downloads</span></div>
<div class="sitem" style="top:106.20px"><svg width="18" height="16" viewBox="0 0 18 16"><path d="M1.5,0.3 H6.8 L8,1.6 H16.3 Q17.7,1.6 17.7,3 V9 H0.2 V1.6 Q0.2,0.3 1.5,0.3 Z" fill="url(#sfBack)"/><path d="M1.5,3.6 H16.3 Q17.7,3.6 17.7,5 V14.2 Q17.7,15.6 16.3,15.6 H1.5 Q0.2,15.6 0.2,14.2 V5 Q0.2,3.6 1.5,3.6 Z" fill="#6d6d6d"/><path d="M8,12 V8 L11,7.4 V11.3" fill="none" stroke="#d6d6d6" stroke-width="1"/><circle cx="7.4" cy="12" r="0.9" fill="#d6d6d6"/></svg><span style="top:3.97px;font-size:12.2px">Music</span></div>
<div class="sitem" style="top:127.00px"><svg width="18" height="16" viewBox="0 0 18 16"><path d="M1.5,0.3 H6.8 L8,1.6 H16.3 Q17.7,1.6 17.7,3 V9 H0.2 V1.6 Q0.2,0.3 1.5,0.3 Z" fill="url(#sfBack)"/><path d="M1.5,3.6 H16.3 Q17.7,3.6 17.7,5 V14.2 Q17.7,15.6 16.3,15.6 H1.5 Q0.2,15.6 0.2,14.2 V5 Q0.2,3.6 1.5,3.6 Z" fill="#6d6d6d"/><rect x="6.3" y="8" width="5.4" height="4.4" fill="none" stroke="#d6d6d6" stroke-width="0.9"/></svg><span style="top:3.97px;font-size:12.2px">Pictures</span></div>
<div class="sitem" style="top:147.70px"><svg width="18" height="16" viewBox="0 0 18 16"><path d="M1.5,0.3 H6.8 L8,1.6 H16.3 Q17.7,1.6 17.7,3 V9 H0.2 V1.6 Q0.2,0.3 1.5,0.3 Z" fill="url(#sfBack)"/><path d="M1.5,3.6 H16.3 Q17.7,3.6 17.7,5 V14.2 Q17.7,15.6 16.3,15.6 H1.5 Q0.2,15.6 0.2,14.2 V5 Q0.2,3.6 1.5,3.6 Z" fill="#6d6d6d"/><rect x="5.8" y="8.6" width="6.4" height="3.6" fill="#d6d6d6"/><rect x="7" y="9.4" width="4" height="2" fill="#6d6d6d"/></svg><span style="top:3.97px;font-size:12.2px">Videos</span></div>
<div class="sitem" style="top:168.30px"><svg width="18" height="18" viewBox="0 0 18 18" style="overflow:visible"><rect x="1.6" y="-1" width="14" height="16.4" rx="2" fill="#cbcbcb" stroke="#a9a9a9" stroke-width="0.7"/><rect x="3.4" y="0.4" width="10.4" height="1.8" rx="0.6" fill="#8a8a8a"/><g fill="none" stroke="#2aa040" stroke-width="1.5"><path d="M6.3,8.4 L8.6,5.4 L10.9,8.4"/><path d="M12,10 L12.4,12.6 L9.6,13.4"/><path d="M7.4,13.4 L5.2,12.4 L6,9.8"/></g></svg><span style="top:3.97px;font-size:12.2px">Trash</span></div>
<div class="shdr" style="top:199.93px;font-size:11.4px">Remote</div>
<div class="sitem" style="top:218.10px"><svg width="18" height="16" viewBox="0 0 18 16"><path d="M1.5,0.3 H6.8 L8,1.6 H16.3 Q17.7,1.6 17.7,3 V9 H0.2 V1.6 Q0.2,0.3 1.5,0.3 Z" fill="url(#sfBack)"/><path d="M1.5,3.6 H16.3 Q17.7,3.6 17.7,5 V14.2 Q17.7,15.6 16.3,15.6 H1.5 Q0.2,15.6 0.2,14.2 V5 Q0.2,3.6 1.5,3.6 Z" fill="#6d6d6d"/></svg><span style="top:3.97px;font-size:12.2px">Network</span></div>
<div class="sitem" style="top:239.20px"><svg width="18" height="18" viewBox="0 0 18 18" style="overflow:visible"><rect x="1.7" y="-0.9" width="14.6" height="16.9" rx="2" fill="#bdbdbd" stroke="#9a9a9a" stroke-width="0.8"/><g fill="#8fa07f"><circle cx="4.5" cy="2.8" r="0.8"/><circle cx="4.5" cy="7.3" r="0.8"/><circle cx="4.5" cy="11.8" r="0.8"/></g><g stroke="#999" stroke-width="0.6"><path d="M6.5,2.8 H9"/><path d="M6.5,7.3 H9"/><path d="M6.5,11.8 H8"/></g><rect x="10.4" y="9.3" width="6.8" height="6.8" fill="#1eae4e"/><path d="M15.2,10.9 L12.4,12.7 L15.2,14.5" fill="none" stroke="#fff" stroke-width="1.7" stroke-linejoin="round"/></svg><span style="top:3.97px;font-size:12.2px">/home/anyuser</span></div>
<div class="sitem" style="top:260.00px"><svg width="18" height="18" viewBox="0 0 18 18" style="overflow:visible"><rect x="1.7" y="-0.9" width="14.6" height="16.9" rx="2" fill="#bdbdbd" stroke="#9a9a9a" stroke-width="0.8"/><g fill="#8fa07f"><circle cx="4.5" cy="2.8" r="0.8"/><circle cx="4.5" cy="7.3" r="0.8"/><circle cx="4.5" cy="11.8" r="0.8"/></g><g stroke="#999" stroke-width="0.6"><path d="M6.5,2.8 H9"/><path d="M6.5,7.3 H9"/><path d="M6.5,11.8 H8"/></g><rect x="10.4" y="9.3" width="6.8" height="6.8" fill="#1eae4e"/><path d="M15.2,10.9 L12.4,12.7 L15.2,14.5" fill="none" stroke="#fff" stroke-width="1.7" stroke-linejoin="round"/></svg><span style="top:3.97px;font-size:12.2px">/pkgs/pkgs</span></div>
<div class="sitem" style="top:280.60px"><svg width="18" height="18" viewBox="0 0 18 18" style="overflow:visible"><rect x="1.7" y="-0.9" width="14.6" height="16.9" rx="2" fill="#bdbdbd" stroke="#9a9a9a" stroke-width="0.8"/><g fill="#8fa07f"><circle cx="4.5" cy="2.8" r="0.8"/><circle cx="4.5" cy="7.3" r="0.8"/><circle cx="4.5" cy="11.8" r="0.8"/></g><g stroke="#999" stroke-width="0.6"><path d="M6.5,2.8 H9"/><path d="M6.5,7.3 H9"/><path d="M6.5,11.8 H8"/></g><rect x="10.4" y="9.3" width="6.8" height="6.8" fill="#1eae4e"/><path d="M15.2,10.9 L12.4,12.7 L15.2,14.5" fill="none" stroke="#fff" stroke-width="1.7" stroke-linejoin="round"/></svg><span style="top:3.97px;font-size:12.2px">/u/anyuser</span></div>
<div class="shdr" style="top:311.93px;font-size:11.4px">Recent</div>
<div class="sitem" style="top:330.40px"><svg width="18" height="18" viewBox="0 0 18 18" style="overflow:visible"><defs><linearGradient id="arG" x1="0" y1="0" x2="0.3" y2="1"><stop offset="0" stop-color="#eeaa60"/><stop offset="1" stop-color="#e66a2a"/></linearGradient></defs><path d="M3.2,4.6 C3.6,0.9 10.4,0.4 10.4,8.6" fill="none" stroke="url(#arG)" stroke-width="4.2" stroke-linecap="round"/><path d="M4.8,8.8 L15.9,8.8 L10.4,15.4 Z" fill="#e8682a" stroke="#e8682a" stroke-width="1.6" stroke-linejoin="round"/></svg><span style="top:3.97px;font-size:12.2px">Modified Today</span></div>
<div class="sitem" style="top:351.20px"><svg width="18" height="18" viewBox="0 0 18 18"><rect x="3.3" y="2.7" width="12" height="11.5" fill="#f4f4f4" stroke="#2a2a2a" stroke-width="1"/><rect x="2.8" y="1.9" width="13" height="2.3" fill="#111"/><ellipse cx="7" cy="2.2" rx="1.3" ry="0.6" fill="#999"/><ellipse cx="11.8" cy="2.2" rx="1.3" ry="0.6" fill="#999"/><g fill="#aaa"><rect x="5.6" y="6.3" width="0.8" height="2.8"/><rect x="8.8" y="6.3" width="0.8" height="2.8"/><rect x="12" y="6.3" width="0.8" height="5"/></g><g fill="#222"><circle cx="6" cy="6.3" r="0.85"/><circle cx="9.2" cy="6.3" r="0.85"/><circle cx="12.4" cy="6.3" r="0.85"/><circle cx="6" cy="9.1" r="0.85"/><circle cx="9.2" cy="9.1" r="0.85"/><circle cx="12.4" cy="9.1" r="0.85"/><circle cx="12.4" cy="11.3" r="0.85"/></g></svg><span style="top:3.97px;font-size:12.2px">Modified Yester…</span></div>
<div class="shdr" style="top:382.33px;font-size:11.4px">Search For</div>
<div class="sitem" style="top:398.40px"><svg width="18" height="16" viewBox="0 0 18 16"><path d="M1.5,0.3 H6.8 L8,1.6 H16.3 Q17.7,1.6 17.7,3 V9 H0.2 V1.6 Q0.2,0.3 1.5,0.3 Z" fill="url(#sfBack)"/><path d="M1.5,3.6 H16.3 Q17.7,3.6 17.7,5 V14.2 Q17.7,15.6 16.3,15.6 H1.5 Q0.2,15.6 0.2,14.2 V5 Q0.2,3.6 1.5,3.6 Z" fill="#6d6d6d"/></svg><span style="top:3.97px;font-size:12.2px">Documents</span></div></div>
<div class="sb">
<div class="abs" style="left:0;top:0;width:10.5px;height:11px;background:#fafafa"></div>
<div class="abs" style="left:0;top:274px;width:10.5px;height:123.5px;background:#e3e3e3"></div>
<div class="abs" style="left:0;top:11px;width:10.5px;height:263px;background:linear-gradient(90deg,#fcfcfc,#f0f0f0)"></div>
<div class="abs" style="left:0;top:397.5px;width:10.5px;height:1px;background:#d6d6d6"></div>
<svg class="abs" style="left:0;top:0" width="11" height="409" viewBox="0 0 11 409"><path d="M2.5,7.3 L5.3,4.2 L8.1,7.3 Z" fill="#4a4a4a"/><path d="M2.5,401.5 L5.3,404.6 L8.1,401.5 Z" fill="#4a4a4a"/></svg>
</div>
<div class="content">
<div class="abs" style="left:35px;top:12px"><svg width="46" height="42" viewBox="0 0 46 42"><path d="M3,0 H16.5 L19.5,3.5 H42.3 Q45,3.5 45,6.5 V20 H0.3 V3 Q0.3,0 3,0 Z" fill="#2f5f8e"/><path d="M3,9.9 H17.6 L20.6,6.7 H42 Q44.8,6.7 44.8,9.7 V38.6 Q44.8,41.6 41.8,41.6 H3.3 Q0.3,41.6 0.3,38.6 V12.9 Q0.3,9.9 3,9.9 Z" fill="#3a79a8"/><path d="M44.8,31 V38.6 Q44.8,41.6 41.8,41.6 H34 Z" fill="#4584b2" opacity="0.6"/></svg></div>
<div class="abs" style="left:14.7px;top:58.6px;width:84px;height:30.4px;background:#308cc6"></div>
<div class="lbl" style="left:6.7px;top:60.5px;width:100px;color:#fff">very important<br>files</div>
</div>
<div class="status"><span class="abs" style="left:1px;top:5.5px;line-height:15px">very important files (folder)</span>
<span class="abs" style="left:156px;top:5.5px;line-height:15px">Zoom:</span>
<div class="abs" style="left:195px;top:10.5px;width:106px;height:3.5px;border-radius:2px;background:#d0d0d0"></div>
<div class="abs" style="left:195px;top:10.5px;width:27px;height:3.5px;border-radius:2px;background:#3b9ad8"></div>
<div class="abs" style="left:219px;top:5.5px;width:9.6px;height:10px;border-radius:2.5px;background:#fafafa;border:1px solid #b0b0b0"></div>
<div class="abs" style="left:306px;top:1px;width:150.4px;height:22.2px;border:1px solid #b8b8b8;background:linear-gradient(180deg,#eaeaea 0%,#d2d2d2 35%,#8a8a8a 60%,#c8c8c8 85%,#e0e0e0 100%);font-size:12px;text-align:center;line-height:24px;color:#111">9.4 TiB free</div></div>
</div>
<!-- TOP BAR -->
<div id="topbar">
<span class="abs" style="left:14px;top:3.5px;font-size:12.6px;letter-spacing:0.1px">Activities</span>
<svg class="abs" style="left:93px;top:5px" width="14" height="11" viewBox="0 0 14 11"><path d="M1.5,1.2 H5.3 L6.6,2.5 H12.2 Q12.8,2.5 12.8,3.1 V9.6 Q12.8,10.2 12.2,10.2 H1.8 Q1.2,10.2 1.2,9.6 V1.8 Q1.2,1.2 1.8,1.2 Z M1.2,4.2 H12.8" fill="none" stroke="#d8d8d8" stroke-width="1.3"/></svg>
<span class="abs" style="left:111px;top:3.5px;font-size:12.2px">Dolphin</span>
<span class="abs" style="left:761px;top:3.5px;font-size:12.2px;word-spacing:-1px">Apr 23&nbsp; 12:39</span>
<svg class="abs" style="left:1419px;top:3px" width="14" height="15" viewBox="0 0 14 15"><rect x="2" y="2.2" width="9.5" height="11.3" rx="0.8" fill="#d5e6f5" stroke="#e8902a" stroke-width="1.4"/><rect x="4.5" y="1" width="4.5" height="2.6" rx="1" fill="#3cc040"/><path d="M5.2,12 V5.3 H7.3 Q9,5.3 9,7.1 Q9,8.8 7.3,8.8 H5.2" fill="none" stroke="#222" stroke-width="1.1"/></svg>
<svg class="abs" style="left:1451px;top:3px" width="14" height="15" viewBox="0 0 14 15"><rect x="2" y="2.2" width="9.5" height="11.3" rx="0.8" fill="#d5e6f5" stroke="#e8902a" stroke-width="1.4"/><rect x="4.5" y="1" width="4.5" height="2.6" rx="1" fill="#3cc040"/><path d="M5.2,12 V5.3 H7.3 Q9,5.3 9,7.1 Q9,8.8 7.3,8.8 H5.2" fill="none" stroke="#222" stroke-width="1.1"/></svg>
<svg class="abs" style="left:1487px;top:4px" width="13" height="13" viewBox="0 0 13 13"><path d="M1,4.5 H3.5 L7,1.5 V11.5 L3.5,8.5 H1 Z" fill="#8a8a8a"/><path d="M8.8,4 Q10.3,6.5 8.8,9 M10.3,2.5 Q12.8,6.5 10.3,10.5" fill="none" stroke="#8a8a8a" stroke-width="1"/><path d="M0.5,12.5 L11.5,1" stroke="#8a8a8a" stroke-width="1.1"/></svg>
<svg class="abs" style="left:1509px;top:4px" width="13" height="13" viewBox="0 0 13 13"><path d="M4,2.6 A5,5 0 1 0 9,2.6" fill="none" stroke="#d0d0d0" stroke-width="1.2"/><path d="M6.5,0.5 V6" stroke="#d0d0d0" stroke-width="1.2"/></svg>
</div>


<!-- DOCK -->
<div id="dock">
<svg class="abs" style="left:0;top:0" width="56" height="842" viewBox="0 22 56 842">
<defs>
<linearGradient id="dfBack" x1="0" y1="0" x2="1" y2="0.3"><stop offset="0" stop-color="#7e2a5a"/><stop offset="0.55" stop-color="#b8403a"/><stop offset="1" stop-color="#ee5e20"/></linearGradient>
<linearGradient id="dfFront" x1="0" y1="0" x2="0.3" y2="1"><stop offset="0" stop-color="#a6a6a6"/><stop offset="1" stop-color="#bdbdbd"/></linearGradient>
<linearGradient id="helpG" x1="0" y1="0" x2="0" y2="1"><stop offset="0.53" stop-color="#2889e0"/><stop offset="0.53" stop-color="#46a2e6"/></linearGradient>
<linearGradient id="shotG" x1="0" y1="0" x2="0" y2="1"><stop offset="0" stop-color="#5786ee"/><stop offset="1" stop-color="#6c98f3"/></linearGradient>

</defs>
<g transform="translate(10,36)">
<path d="M3,0 H16 L18.5,2.2 H33 Q36,2.2 36,5.2 V16 H0 V3 Q0,0 3,0 Z" fill="url(#dfBack)"/>
<path d="M3,6.4 H33 Q36,6.4 36,9.4 V29.3 Q36,32.3 33,32.3 H3 Q0,32.3 0,29.3 V9.4 Q0,6.4 3,6.4 Z" fill="url(#dfFront)"/>
<rect x="12.7" y="13" width="10" height="2.4" rx="1" fill="#fff"/>
</g>
<circle cx="28" cy="106" r="18" fill="url(#helpG)"/>
<path d="M23.6,99.5 Q23.8,94.6 28.3,94.6 Q32.8,94.6 32.8,99 Q32.8,101.8 29.6,103.6 Q28,104.6 28,107.5 V109" fill="none" stroke="#fff" stroke-width="2"/>
<circle cx="28" cy="113.6" r="1.6" fill="#fff"/>
<rect x="10" y="143" width="36" height="35.5" rx="5.5" fill="url(#shotG)"/>
<rect x="16.2" y="149.3" width="23" height="20.5" fill="none" stroke="#fff" stroke-width="1.6" stroke-dasharray="1.6 2.2"/>
<path d="M38.6,165.5 V174 M34.4,169.8 H42.8" stroke="#fff" stroke-width="1.8"/>
<rect x="8.6" y="188.5" width="38.6" height="1.2" fill="#8a8488"/>
<rect x="2.3" y="192.3" width="51.2" height="50.6" rx="9" fill="#3b3337"/>
<g transform="translate(10,201)">
<path d="M3,0 H16 L18.5,2.2 H33 Q36,2.2 36,5.2 V16 H0 V3 Q0,0 3,0 Z" fill="url(#dfBack)"/>
<path d="M3,6.4 H33 Q36,6.4 36,9.4 V29.3 Q36,32.3 33,32.3 H3 Q0,32.3 0,29.3 V9.4 Q0,6.4 3,6.4 Z" fill="url(#dfFront)"/>
<rect x="12.7" y="13" width="10" height="2.4" rx="1" fill="#fff"/>
</g>
<circle cx="4.8" cy="213.7" r="2.2" fill="#e95420"/>
<circle cx="4.8" cy="221" r="2.2" fill="#e95420"/>
<rect x="13" y="254.4" width="29.4" height="35.3" rx="3.5" fill="#cacaca"/>
<rect x="13" y="254.4" width="29.4" height="35.3" rx="3.5" fill="none" stroke="#b0b0b0" stroke-width="0.6"/>
<rect x="16" y="257.2" width="23.4" height="4.2" rx="1.5" fill="#8e8e8e"/>
<path d="M28.1,271.4 L33.4,280.6 L22.8,280.6 Z" fill="none" stroke="#2a9a2a" stroke-width="3.3" stroke-linejoin="round" stroke-dasharray="8.6 1.8" stroke-dashoffset="-4.4"/>
<g fill="#ffffff">
<rect x="16.5" y="821.5" width="4.8" height="4.8" rx="1"/><rect x="25.6" y="821.5" width="4.8" height="4.8" rx="1"/><rect x="34.7" y="821.5" width="4.8" height="4.8" rx="1"/>
<rect x="16.5" y="831" width="4.8" height="4.8" rx="1"/><rect x="25.6" y="831" width="4.8" height="4.8" rx="1"/><rect x="34.7" y="831" width="4.8" height="4.8" rx="1"/>
<rect x="16.5" y="840.5" width="4.8" height="4.8" rx="1"/><rect x="25.6" y="840.5" width="4.8" height="4.8" rx="1"/><rect x="34.7" y="840.5" width="4.8" height="4.8" rx="1"/>
</g>
</svg>
</div>


</body></html>
